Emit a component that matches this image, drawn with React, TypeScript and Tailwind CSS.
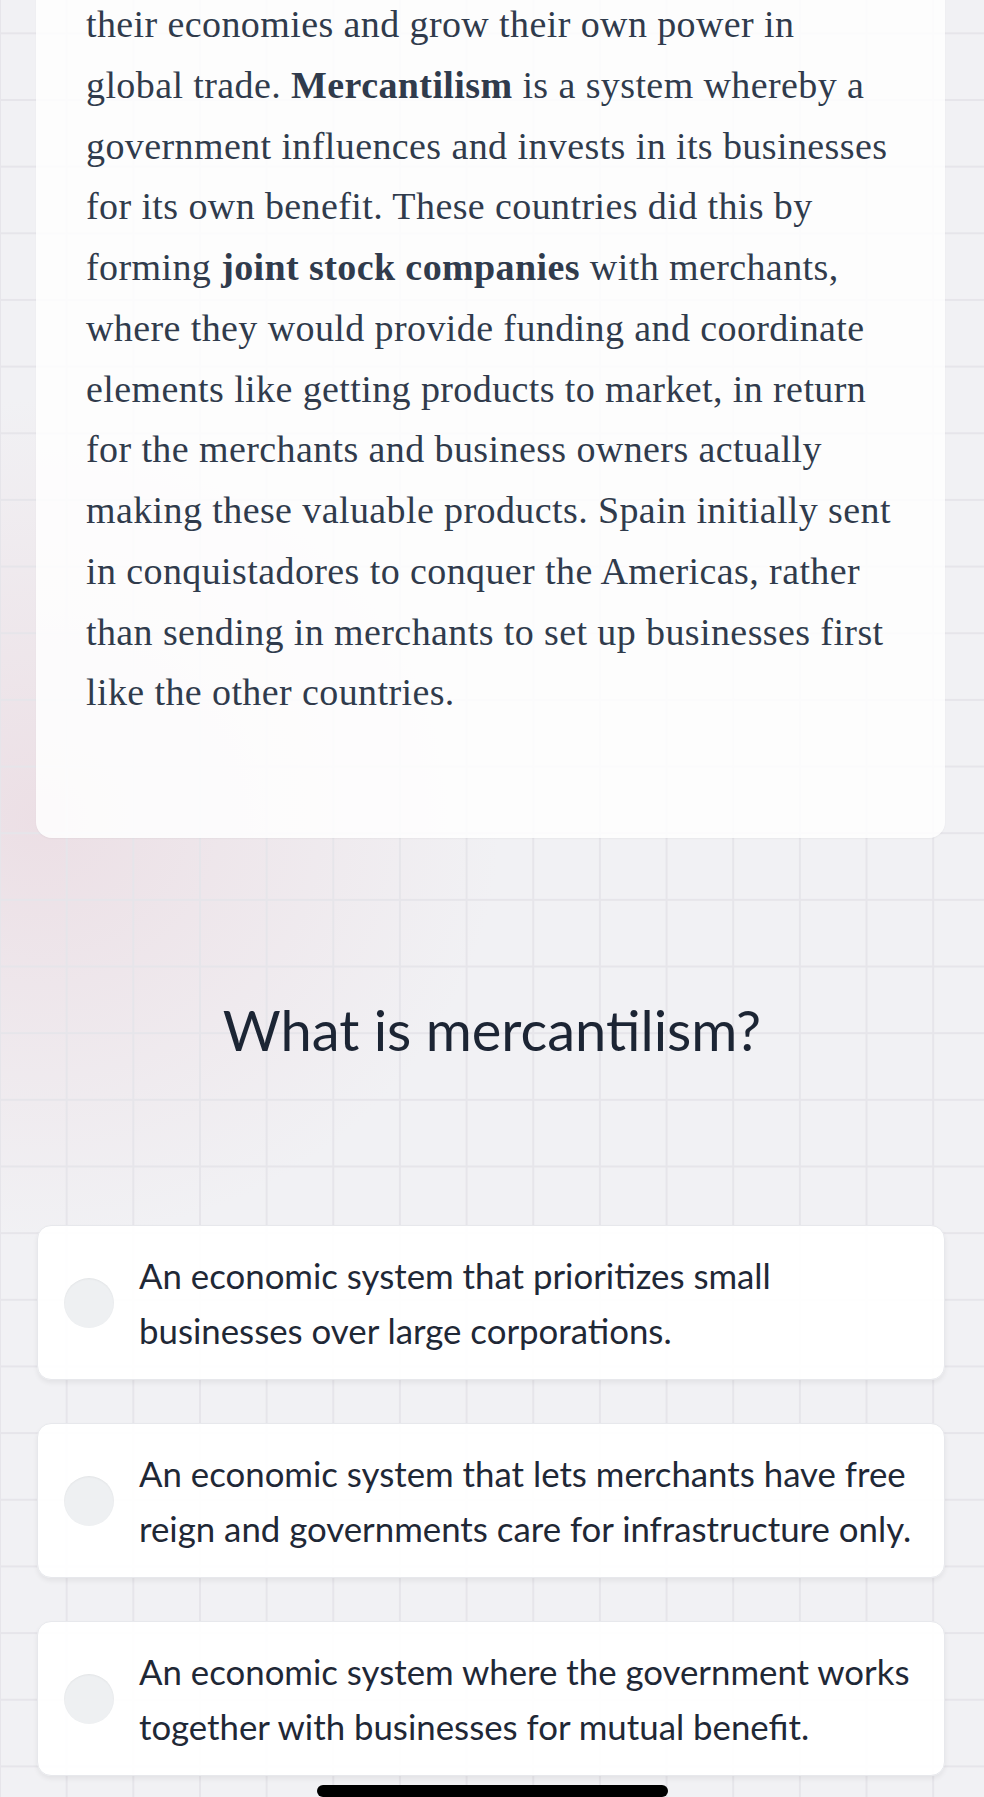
const options = [
  ["An economic system that prioritizes small", "businesses over large corporations."],
  ["An economic system that lets merchants have free", "reign and governments care for infrastructure only."],
  ["An economic system where the government works", "together with businesses for mutual benefit."],
];

const Passage = () => (
  <div className="-mt-6 ml-[36px] mr-[39px] rounded-b-[16px] bg-white/85 pt-[18px] pb-[115px] pl-[50px] shadow-[0_1px_2px_rgba(0,0,0,0.04)]">
    <p className="whitespace-nowrap font-['Liberation_Serif',serif] text-[38px] leading-[60.75px] tracking-[0.4px] text-[#303b4c]">
      their economies and grow their own power in
      <br />
      global trade. <b>Mercantilism</b> is a system whereby a
      <br />
      government influences and invests in its businesses
      <br />
      for its own benefit. These countries did this by
      <br />
      forming <b>joint stock companies</b> with merchants,
      <br />
      where they would provide funding and coordinate
      <br />
      elements like getting products to market, in return
      <br />
      for the merchants and business owners actually
      <br />
      making these valuable products. Spain initially sent
      <br />
      in conquistadores to conquer the Americas, rather
      <br />
      than sending in merchants to set up businesses first
      <br />
      like the other countries.
    </p>
  </div>
);

const Option = ({ lines }: { lines: string[] }) => (
  <div className="flex h-[155px] items-center gap-[25px] rounded-[14px] border border-[#e7e8ec] bg-white/95 pl-[26px] shadow-[0_3px_5px_rgba(0,0,0,0.06)]">
    <div className="h-[50px] w-[50px] shrink-0 rounded-full bg-[#eef0f2] shadow-[inset_0_1px_2px_rgba(0,0,0,0.05)]" />
    <p className="whitespace-nowrap font-['Lato',sans-serif] text-[34.8px] leading-[55px] text-[#1f2836]">
      {lines[0]}
      <br />
      {lines[1]}
    </p>
  </div>
);

export default function App() {
  return (
    <div className="h-[1797px] overflow-hidden bg-[#f1f1f4] bg-[radial-gradient(ellipse_460px_420px_at_40px_820px,#ecdfe5_0%,rgba(241,241,244,0)_100%)]">
      <div className="flex h-full flex-col bg-[linear-gradient(to_right,#e6e5ea_2px,transparent_2px),linear-gradient(to_bottom,#e6e5ea_2px,transparent_2px)] bg-size-[66.67px_66.67px] bg-position-[-1px_32.33px]">
        <Passage />

        <div className="flex h-[387px] items-center justify-center pb-[4px]">
          <h2 className="font-['Lato',sans-serif] text-[56px] leading-none text-[#1c2534]">
            What is mercantilism?
          </h2>
        </div>

        <div className="ml-[37px] mr-[39px] flex flex-col gap-[43px]">
          {options.map((o, i) => (
            <Option key={i} lines={o} />
          ))}
        </div>

        <div className="mt-[9px] flex justify-center">
          <div className="h-[12px] w-[351px] rounded-full bg-black" />
        </div>
      </div>
    </div>
  );
}
